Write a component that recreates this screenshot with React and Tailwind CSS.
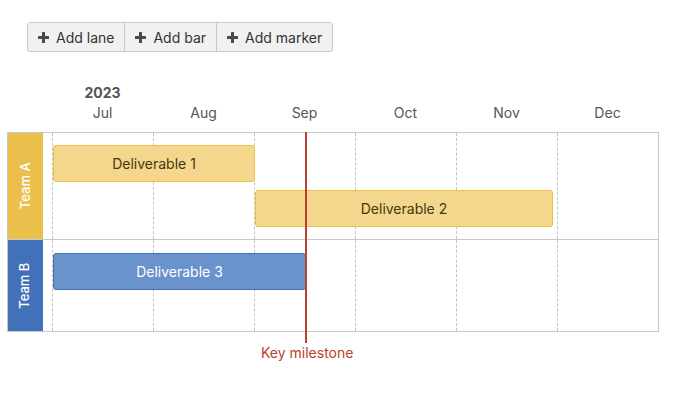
import React from 'react'

const months = ['Jul', 'Aug', 'Sep', 'Oct', 'Nov', 'Dec']

const lanes = [
  {
    name: 'Team A',
    height: 'h-[106px]',
    color: 'bg-[#ebbf4c]',
    bars: [
      { label: 'Deliverable 1', pos: 'left-[1px] top-[12px] w-[202px]' },
      { label: 'Deliverable 2', pos: 'left-[203px] top-[57px] w-[298px]' },
    ],
    barStyle: 'bg-[#f4d78c] border-[#ecbf49] text-[#45370f]',
  },
  {
    name: 'Team B',
    height: 'h-[91px]',
    color: 'bg-[#4171b8]',
    bars: [{ label: 'Deliverable 3', pos: 'left-[1px] top-[13px] w-[253px]' }],
    barStyle: 'bg-[#6a93cb] border-[#4171b8] text-white',
  },
]

function PlusIcon() {
  return (
    <svg width="11" height="11" viewBox="0 0 11 11" className="text-[#4a4a4a]">
      <rect x="4" y="0" width="3" height="11" rx="0.6" fill="currentColor" />
      <rect x="0" y="4" width="11" height="3" rx="0.6" fill="currentColor" />
    </svg>
  )
}

function ToolButton({ children, last }) {
  return (
    <button className={`h-full flex items-center gap-[7px] px-[10px] text-[14px] text-[#333] ${last ? '' : 'border-r border-[#c9c9c9]'}`}>
      <PlusIcon />
      {children}
    </button>
  )
}

function Lane({ lane, first }) {
  return (
    <div className={`flex ${first ? '' : 'border-t border-[#c8c8c8]'}`}>
      <div className={`w-[35px] ${lane.height} ${lane.color} flex items-center justify-center`}>
        <span className="-rotate-90 whitespace-nowrap text-white text-[13px] font-medium">{lane.name}</span>
      </div>
      <div className="pl-[9px]">
        <div className={`relative w-[606px] ${lane.height} grid grid-cols-6`}>
          {months.map(m => (
            <div key={m} className="border-l border-dashed border-[#c4c4c4]" />
          ))}
          {lane.bars.map(b => (
            <div
              key={b.label}
              className={`absolute ${b.pos} h-[37px] rounded-[3px] border flex items-center justify-center text-[14px] ${lane.barStyle}`}
            >
              {b.label}
            </div>
          ))}
        </div>
      </div>
    </div>
  )
}

export default function App() {
  return (
    <div className="relative w-[696px] h-[397px] bg-white font-['Inter',sans-serif]">
      {/* Toolbar */}
      <div className="pt-[22px] pl-[27px]">
        <div className="inline-flex h-[30px] border border-[#c9c9c9] rounded-[3px] bg-[#f1f1f1] overflow-hidden">
          <ToolButton>Add lane</ToolButton>
          <ToolButton>Add bar</ToolButton>
          <ToolButton last>Add marker</ToolButton>
        </div>
      </div>

      {/* Header */}
      <div className="mt-[30px] pl-[52px]">
        <div className="grid grid-cols-6 w-[606px] h-5 text-[14px] font-bold text-[#555]">
          <div className="text-center">2023</div>
        </div>
        <div className="grid grid-cols-6 w-[606px] h-5 text-[14px] text-[#555]">
          {months.map(m => (
            <div key={m} className="text-center">{m}</div>
          ))}
        </div>
      </div>

      {/* Chart */}
      <div className="relative mt-[10px] ml-[7px] w-[652px] border border-[#c8c8c8]">
        {lanes.map((lane, i) => (
          <Lane key={lane.name} lane={lane} first={i === 0} />
        ))}
        {/* Milestone */}
        <div className="absolute left-[297px] -top-px w-[2px] h-[211px] bg-[#b9412f]" />
        <div className="absolute left-[253px] top-[209px] w-[90px] text-center text-[14px] text-[#b9412f] whitespace-nowrap">
          Key milestone
        </div>
      </div>
    </div>
  )
}
